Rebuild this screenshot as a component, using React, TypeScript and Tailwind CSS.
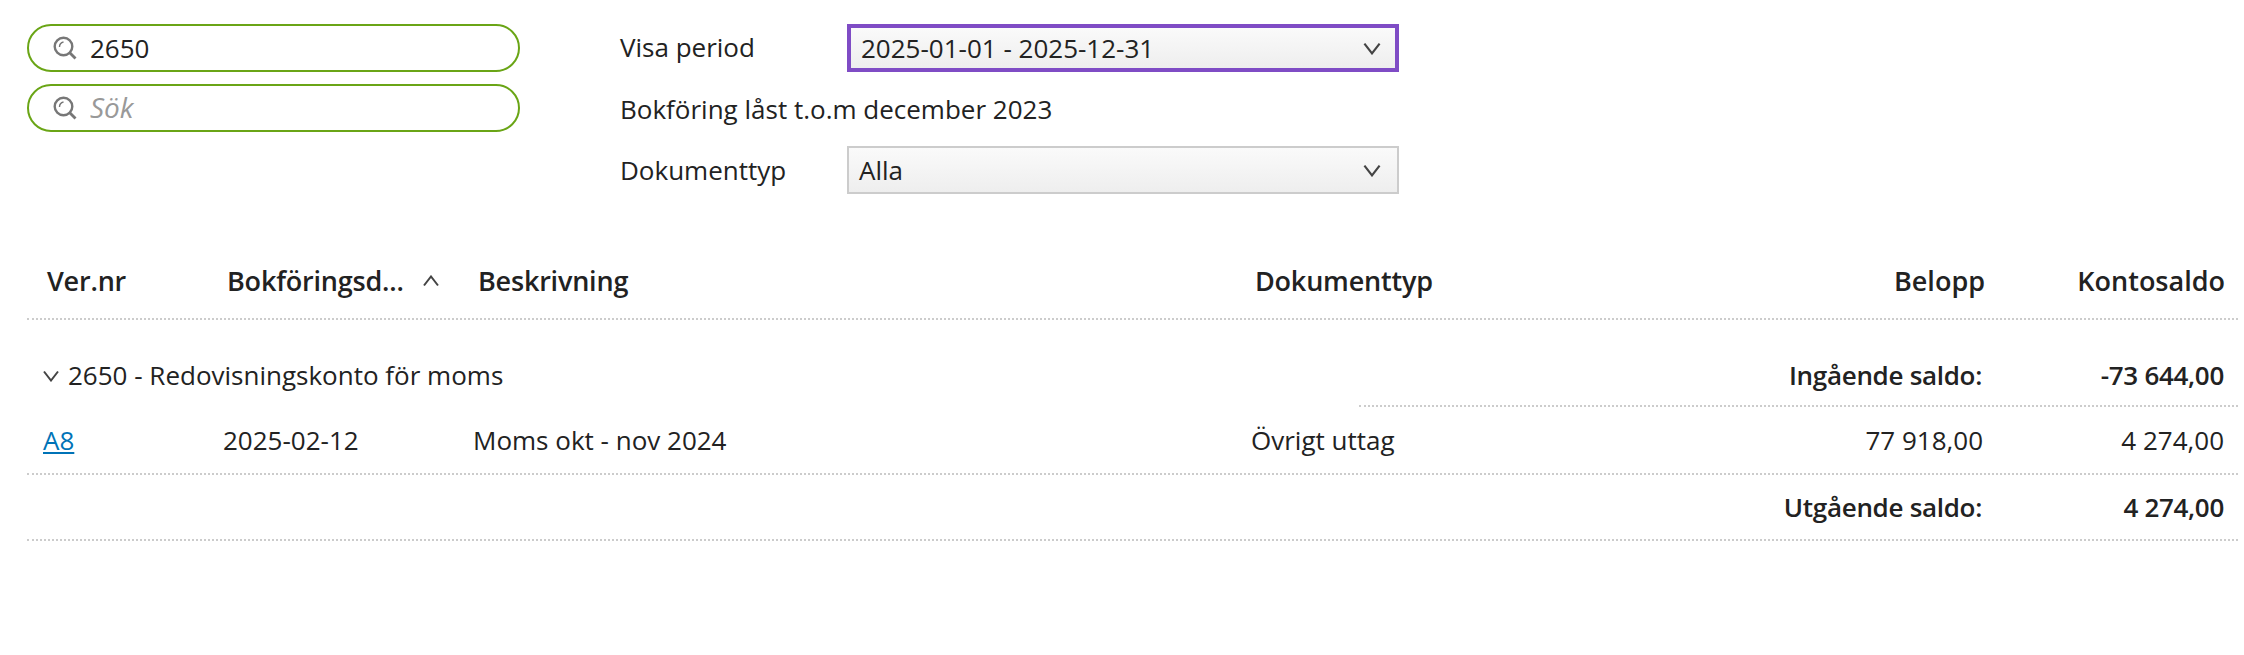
import React from "react";

const SearchIcon = () => (
  <svg className="w-[24px] h-[24px] shrink-0" viewBox="0 0 24 24" fill="none" stroke="#777" strokeWidth="2.4">
    <circle cx="10.5" cy="10.5" r="8.8" />
    <path d="M6.5 11c0-3 1.5-4.5 4-5" strokeWidth="1.4" />
    <path d="M17 17l5.5 5.5" strokeWidth="2.8" />
  </svg>
);

const Chevron = ({ up = false, className = "" }: { up?: boolean; className?: string }) => (
  <svg className={className} viewBox="0 0 18 12" fill="none" stroke="#444" strokeWidth="2">
    <path d={up ? "M2 10.5l7-9 7 9" : "M2 1.5l7 9 7-9"} />
  </svg>
);

const Search = ({ value, placeholder }: { value?: string; placeholder?: string }) => (
  <div className="flex items-center h-[48px] rounded-full border-2 border-[#6aa516] pl-[24px] bg-white">
    <SearchIcon />
    <input
      readOnly
      value={value ?? ""}
      placeholder={placeholder}
      className="ml-[13px] w-full bg-transparent outline-none text-[26px] text-[#222] placeholder:italic placeholder:text-[28px] placeholder:text-[#999]"
    />
  </div>
);

const Select = ({ text, active = false }: { text: string; active?: boolean }) => (
  <div
    className={
      "flex items-center justify-between w-[552px] h-[48px] bg-gradient-to-b from-[#fafafa] to-[#eeeeee] text-[#222] " +
      (active ? "border-[4px] border-[#7f4cc5] pl-[10px] pr-[13px]" : "border-2 border-[#ccc] pl-[10px] pr-[15px]")
    }
  >
    <span>{text}</span>
    <Chevron className="w-[20px] h-[13px]" />
  </div>
);

const cols = "grid grid-cols-[180px_251px_778px_432px_328px_242px]";
const line = "border-b-2 border-dotted border-[#ccc]";

export default function App() {
  return (
    <div className="w-[2244px] h-[655px] bg-white text-[26px] text-[#222] font-['Open_Sans',sans-serif] overflow-hidden">
      <div className="flex pt-[24px] pl-[27px]">
        <div className="w-[493px] flex flex-col gap-[12px]">
          <Search value="2650" />
          <Search placeholder="Sök" />
        </div>
        <div className="ml-[100px] flex flex-col">
          <div className="flex items-center h-[48px]">
            <span className="w-[227px] pb-[2px]">Visa period</span>
            <Select text="2025-01-01 - 2025-12-31" active />
          </div>
          <div className="h-[74px] flex items-center">Bokföring låst t.o.m december 2023</div>
          <div className="flex items-center h-[48px]">
            <span className="w-[227px]">Dokumenttyp</span>
            <Select text="Alla" />
          </div>
        </div>
      </div>

      <div className="mt-[54px] ml-[27px] w-[2211px]">
        <div className={cols + " " + line + " h-[72px] items-center font-semibold text-[27px] tracking-[-0.2px] pb-[4px]"}>
          <div className="pl-[20px]">Ver.nr</div>
          <div className="pl-[20px] flex items-center">
            <span>Bokföringsd...</span>
            <Chevron up className="ml-[18px] w-[18px] h-[12px]" />
          </div>
          <div className="pl-[20px]">Beskrivning</div>
          <div className="pl-[19px]">Dokumenttyp</div>
          <div className="pr-[11px] text-right tracking-normal">Belopp</div>
          <div className="pr-[13px] text-right tracking-normal">Kontosaldo</div>
        </div>

        <div className="relative h-[87px] flex items-center pt-[24px] justify-between">
          <div className="flex items-center pl-[15px] gap-[8px]">
            <Chevron className="w-[18px] h-[12px]" />
            <span>2650 - Redovisningskonto för moms</span>
          </div>
          <div className="flex font-semibold tracking-[-0.3px]">
            <div className="w-[328px] pr-[14px] text-right">Ingående saldo:</div>
            <div className="w-[242px] pr-[14px] text-right">-73 644,00</div>
          </div>
          <div className={"absolute bottom-0 right-0 w-[879px] " + line} />
        </div>

        <div className={cols + " " + line + " h-[68px] items-center"}>
          <div className="pl-[16px]">
            <a href="#" className="text-[#0073b7] underline">A8</a>
          </div>
          <div className="pl-[16px]">2025-02-12</div>
          <div className="pl-[15px]">Moms okt - nov 2024</div>
          <div className="pl-[15px]">Övrigt uttag</div>
          <div className="pr-[13px] text-right">77 918,00</div>
          <div className="pr-[14px] text-right">4 274,00</div>
        </div>

        <div className={"flex justify-end " + line + " h-[66px] items-center font-semibold tracking-[-0.3px]"}>
          <div className="w-[328px] pr-[14px] text-right">Utgående saldo:</div>
          <div className="w-[242px] pr-[14px] text-right">4 274,00</div>
        </div>
      </div>
    </div>
  );
}
